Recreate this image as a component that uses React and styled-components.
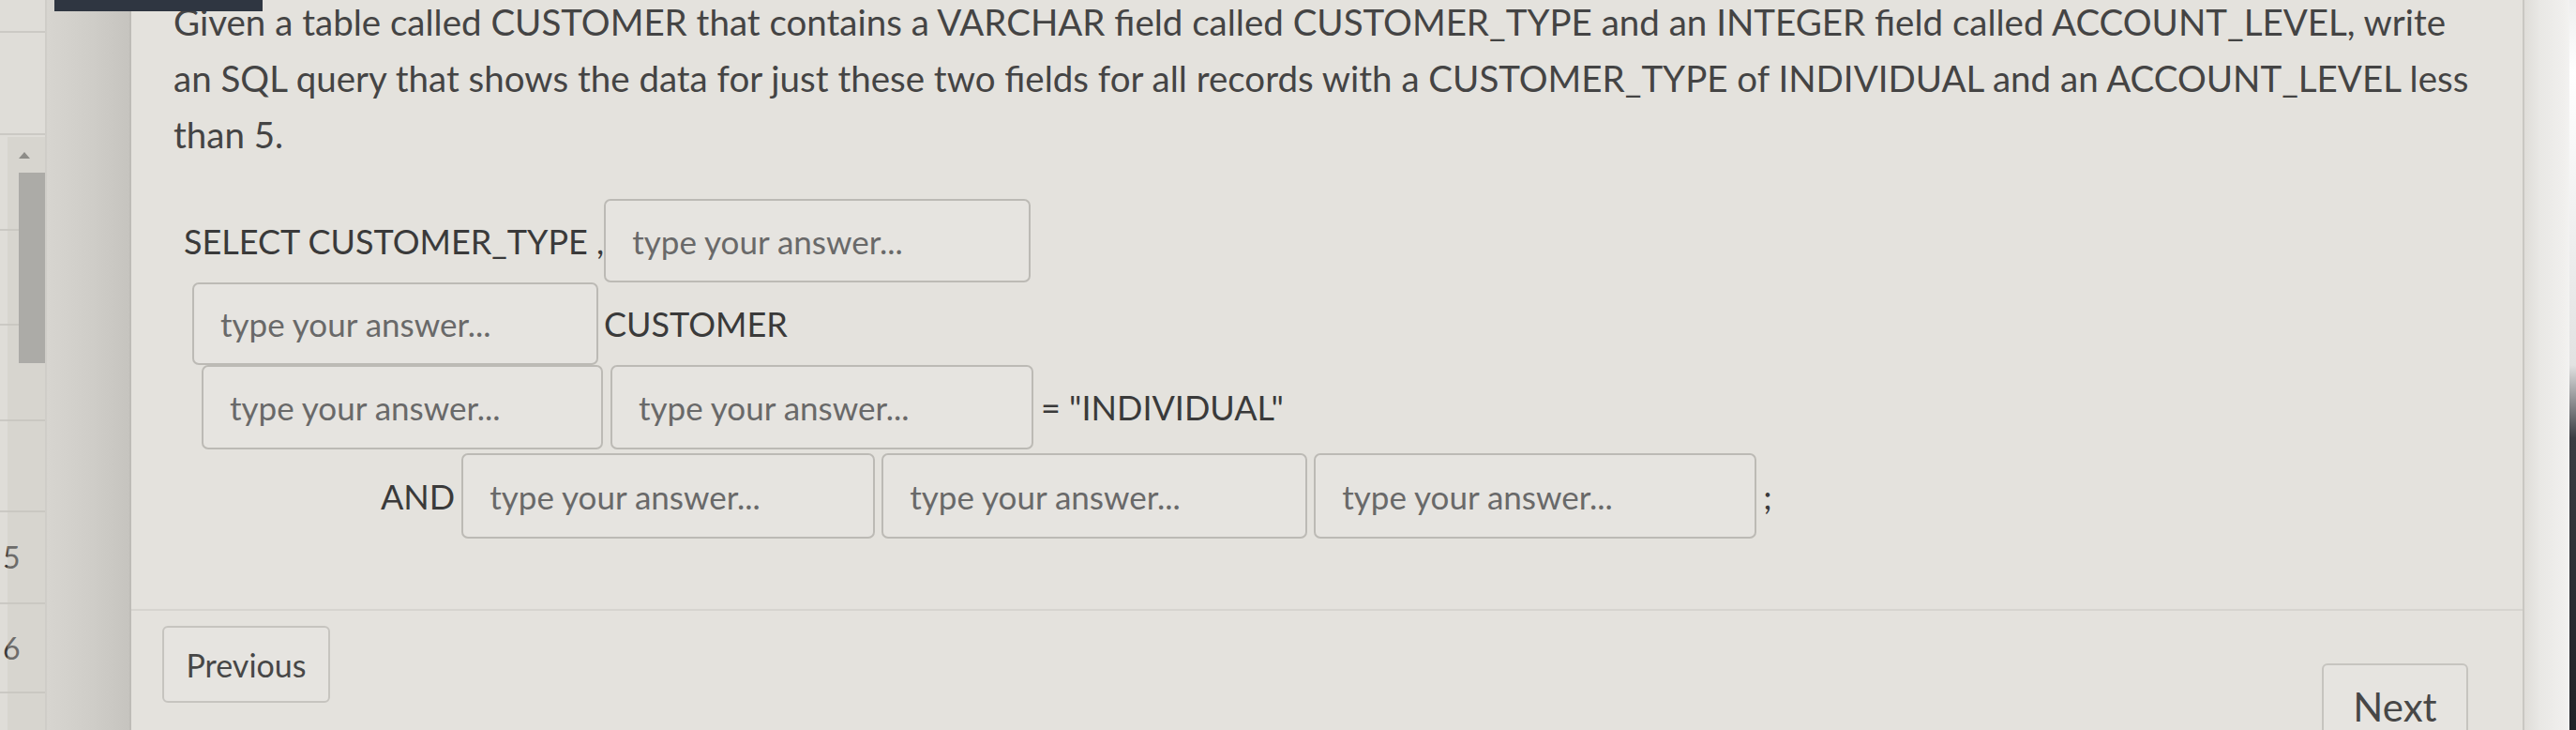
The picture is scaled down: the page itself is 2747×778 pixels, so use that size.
import React from "react";
import styled, { createGlobalStyle } from "styled-components";

const Global = createGlobalStyle`
  html, body {
    margin: 0;
    padding: 0;
    width: 2747px;
    height: 778px;
    overflow: hidden;
    background: #dddbd6;
  }
  body {
    font-family: Lato, "Open Sans", "Liberation Sans", sans-serif;
  }
  * { box-sizing: border-box; }
`;

const Screen = styled.div`
  position: relative;
  width: 2747px;
  height: 778px;
  display: flex;
  overflow: hidden;
  background: #dcdad5;
`;

const TopBlock = styled.div`
  position: absolute;
  left: 58px;
  top: 0;
  width: 222px;
  height: 12px;
  background: #2f3641;
  z-index: 3;
`;

/* ---------- left sidebar ---------- */
const Sidebar = styled.div`
  position: relative;
  flex: 0 0 50px;
  display: flex;
  flex-direction: column;
  background: #dfddd8;
  overflow: hidden;
  border-right: 2px solid #cfcdc8;
`;

const SideRow = styled.div`
  flex: 0 0 ${(p) => p.$h}px;
  border-bottom: 2px solid #cbc9c4;
  display: flex;
  align-items: center;
  font-size: 32px;
  color: #3c3c3c;
`;

const SideNum = styled.span`
  margin-left: 3px;
  line-height: 1;
`;

const ScrollTrack = styled.div`
  position: absolute;
  left: 8px;
  top: 146px;
  width: 42px;
  bottom: 0;
  display: flex;
  flex-direction: column;
  align-items: center;
  background: rgba(200, 198, 193, 0.35);
`;

const ScrollArrow = styled.div`
  flex: 0 0 38px;
  display: flex;
  align-items: center;
  justify-content: center;
  width: 100%;
  &::before {
    content: "";
    border-left: 6px solid transparent;
    border-right: 6px solid transparent;
    border-bottom: 7px solid #8d8c88;
    margin-left: -6px;
  }
`;

const ScrollThumb = styled.div`
  width: 30px;
  margin-left: 12px;
  height: 203px;
  background: #acaba7;
`;

/* ---------- gutter ---------- */
const Gutter = styled.div`
  flex: 0 0 88px;
  background: linear-gradient(to right, #d7d5d0 0%, #cfcdc8 55%, #c6c4bf 100%);
`;

/* ---------- card ---------- */
const Card = styled.main`
  flex: 1 1 auto;
  display: flex;
  flex-direction: column;
  background: #e4e2dd;
  border-left: 2px solid #bebcb7;
  border-right: 2px solid #c9c7c2;
  padding: 0 58px 0 45px;
  min-width: 0;
`;

const Prompt = styled.p`
  margin: -7px 0 0 0;
  font-size: 38.5px;
  line-height: 60px;
  color: #444444;
  white-space: nowrap;
`;

const Query = styled.div`
  margin-top: 39px;
  display: flex;
  flex-direction: column;
`;

const QueryRow = styled.div`
  display: flex;
  align-items: center;
  gap: ${(p) => p.$gap ?? 8}px;
  height: ${(p) => p.$h}px;
  padding-left: ${(p) => p.$indent}px;
  margin-top: ${(p) => p.$mt || 0}px;
`;

const Code = styled.span`
  font-size: 36px;
  color: #3a3a3a;
  white-space: pre;
  line-height: 1;
`;

const Blank = styled.input.attrs({ type: "text", placeholder: "type your answer..." })`
  width: ${(p) => p.$w}px;
  height: 100%;
  padding: 0 0 0 28px;
  border: 2px solid #bcbab5;
  border-radius: 7px;
  background: #e6e4e0;
  font-family: Lato, "Open Sans", "Liberation Sans", sans-serif;
  font-size: 35px;
  color: #3d3d3d;
  outline: none;
  &::placeholder {
    color: #696969;
  }
`;

const Divider = styled.hr`
  margin: 75px -58px 0 -45px;
  border: 0;
  border-top: 2px solid #d6d4cf;
`;

const Footer = styled.div`
  display: flex;
  justify-content: space-between;
  align-items: flex-start;
  margin-top: 16px;
  margin-left: -12px;
`;

const NavButton = styled.button`
  width: ${(p) => p.$w}px;
  height: ${(p) => p.$h}px;
  margin-top: ${(p) => p.$mt || 0}px;
  border: 2px solid #c6c4bf;
  border-radius: 6px;
  background: #e6e4e0;
  font-family: Lato, "Open Sans", "Liberation Sans", sans-serif;
  font-size: ${(p) => p.$fs}px;
  color: #474747;
  padding: 0;
  cursor: pointer;
`;

/* ---------- right edge ---------- */
const RightEdge = styled.div`
  flex: 0 0 55px;
  display: flex;
  background: linear-gradient(to right, #dfddd9 0%, #e9e8e5 30%, #f0efed 75%, #f6f6f5 100%);
`;

const RightGlass = styled.div`
  flex: 1;
`;

const RightRim = styled.div`
  flex: 0 0 7px;
  background: linear-gradient(
    to bottom,
    #eeeeee 0%,
    #ffffff 10%,
    #f4f4f4 25%,
    #e2e2e2 50%,
    #3a3c42 60%,
    #1f2126 100%
  );
`;

export default function App() {
  return (
    <>
      <Global />
      <Screen>
        <TopBlock />
        <Sidebar>
          <SideRow $h={35} />
          <SideRow $h={109} />
          <SideRow $h={102} />
          <SideRow $h={101} />
          <SideRow $h={102} />
          <SideRow $h={97} />
          <SideRow $h={98}>
            <SideNum>5</SideNum>
          </SideRow>
          <SideRow $h={95}>
            <SideNum>6</SideNum>
          </SideRow>
          <SideRow $h={60} />
          <ScrollTrack>
            <ScrollArrow />
            <ScrollThumb />
          </ScrollTrack>
        </Sidebar>
        <Gutter />
        <Card>
          <Prompt>
            Given a table called CUSTOMER that contains a VARCHAR field called CUSTOMER_TYPE and an INTEGER field called ACCOUNT_LEVEL, write
            <br />
            an SQL query that shows the data for just these two fields for all records with a CUSTOMER_TYPE of INDIVIDUAL and an ACCOUNT_LEVEL less
            <br />
            than 5.
          </Prompt>
          <Query>
            <QueryRow $h={89} $indent={11} $gap={0}>
              <Code>SELECT CUSTOMER_TYPE ,</Code>
              <Blank $w={455} />
            </QueryRow>
            <QueryRow $h={88} $indent={20} $gap={6}>
              <Blank $w={433} />
              <Code>CUSTOMER</Code>
            </QueryRow>
            <QueryRow $h={90} $indent={30} $gap={8}>
              <Blank $w={428} />
              <Blank $w={451} />
              <Code>= "INDIVIDUAL"</Code>
            </QueryRow>
            <QueryRow $h={91} $indent={221} $gap={7} $mt={4}>
              <Code>AND</Code>
              <Blank $w={441} />
              <Blank $w={454} />
              <Blank $w={472} />
              <Code>;</Code>
            </QueryRow>
          </Query>
          <Divider />
          <Footer>
            <NavButton $w={179} $h={82} $fs={34}>Previous</NavButton>
            <NavButton $w={156} $h={92} $fs={42} $mt={40}>Next</NavButton>
          </Footer>
        </Card>
        <RightEdge>
          <RightGlass />
          <RightRim />
        </RightEdge>
      </Screen>
    </>
  );
}
